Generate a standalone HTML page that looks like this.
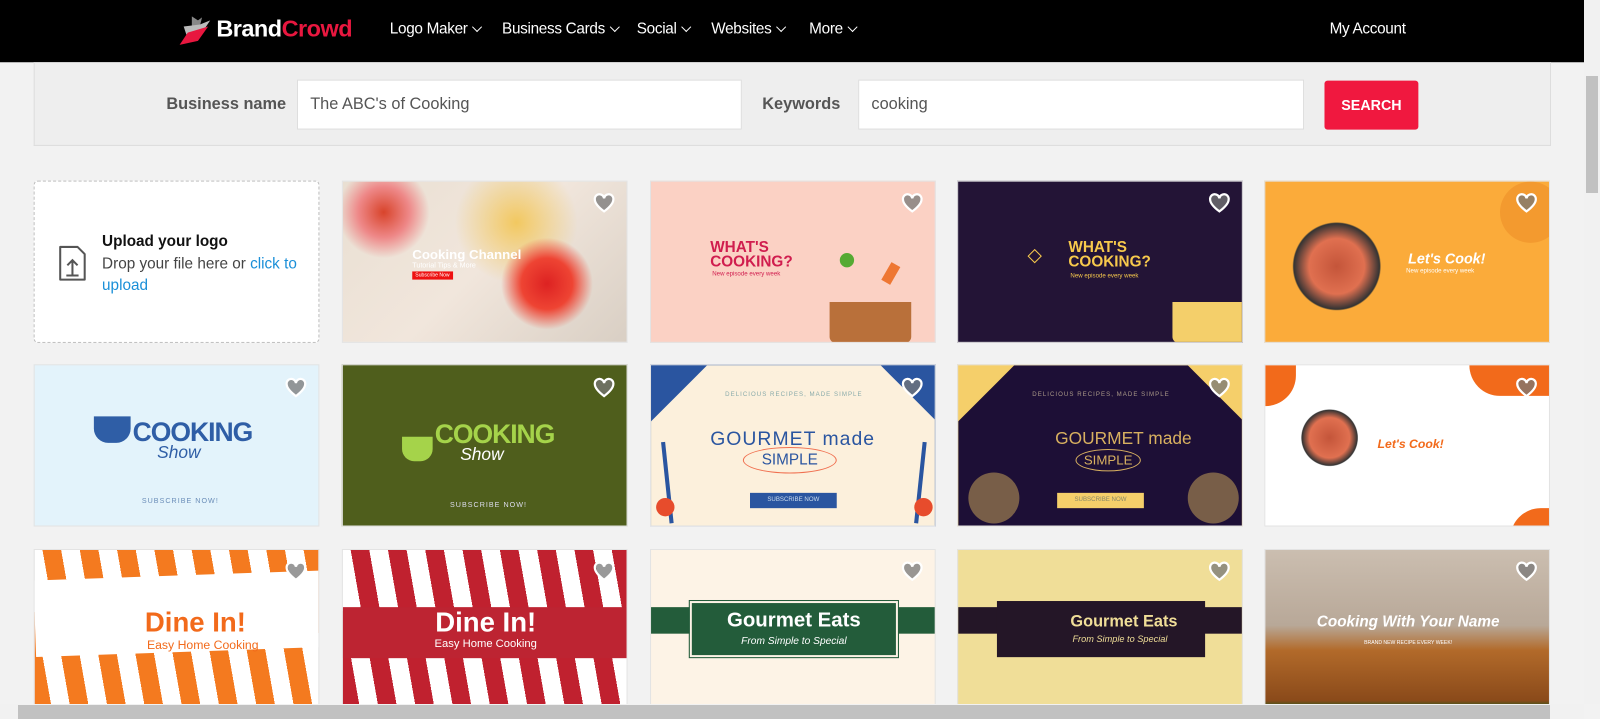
<!DOCTYPE html>
<html><head><meta charset="utf-8"><style>
*{box-sizing:border-box;margin:0;padding:0}
body{width:1600px;height:719px;overflow:hidden;background:#f2f2f2;font-family:"Liberation Sans",sans-serif;position:relative}
#w{position:absolute;left:0;top:0;width:1568px;height:705px;transform:scale(1.020408);transform-origin:0 0}
.nav{position:absolute;left:0;top:0;width:1568px;height:61px;background:#000;color:#fff}
.nav .it{position:absolute;top:20px;font-size:15px;letter-spacing:-0.3px}
.chev{display:inline-block;width:7px;height:7px;border-right:1.6px solid #fff;border-bottom:1.6px solid #fff;transform:rotate(45deg);margin-left:6px;position:relative;top:-3px}
.panel{position:absolute;left:33px;top:61px;width:1487px;height:82px;background:#eee;border:1px solid #ddd;border-top:none}
.lbl{position:absolute;top:94px;font-size:16px;font-weight:bold;color:#555}
.inp{position:absolute;top:78px;height:49px;background:#fff;border:1px solid #ddd;font-size:16px;color:#555;padding:15px 12px}
.btn{position:absolute;left:1298px;top:79px;width:92px;height:48px;background:#f0183f;border-radius:3px;color:#fff;font-weight:bold;font-size:14px;text-align:center;line-height:48px}
.card{position:absolute;width:280px;overflow:hidden;border:1px solid #e3e3e3}
.vs{position:absolute;left:1584px;top:0;width:16px;height:704px;background:#f1f1f1}
.hs{position:absolute;left:0;top:704px;width:1584px;height:15px;background:#f1f1f1}
</style></head><body>
<div id="w">
<div class="nav">
 <svg style="position:absolute;left:174px;top:14px" width="36" height="32" viewBox="0 0 36 32"><path d="M14 2l6 4 4-3-2 8-8 4z" fill="#888"/><path d="M6 12l16-2 10-4-8 12-14 6z" fill="#bbb"/><path d="M2 30l8-12 20-6-10 14z" fill="#e8173f"/></svg>
 <div style="position:absolute;left:212px;top:15px;font-size:23px;font-weight:bold;letter-spacing:-0.5px">Brand<span style="color:#e8173f">Crowd</span></div>
 <div class="it" style="left:382px">Logo Maker<span class="chev"></span></div>
 <div class="it" style="left:492px">Business Cards<span class="chev"></span></div>
 <div class="it" style="left:624px">Social<span class="chev"></span></div>
 <div class="it" style="left:697px">Websites<span class="chev"></span></div>
 <div class="it" style="left:793px">More<span class="chev"></span></div>
 <div class="it" style="left:1303px">My Account</div>
</div>
<div class="panel"></div>
<div class="lbl" style="left:163px">Business name</div>
<div class="inp" style="left:291px;width:436px">The ABC's of Cooking</div>
<div class="lbl" style="left:747px">Keywords</div>
<div class="inp" style="left:841px;width:437px">cooking</div>
<div class="btn">SEARCH</div>

<div class="card" style="left:33px;top:177px;height:159px;background:#fff;border:1px dashed #bbb;border-radius:4px">
 <svg style="position:absolute;left:22px;top:61px" width="30" height="38" viewBox="0 0 30 38"><path d="M3 3h17l7 7v25H3z" fill="none" stroke="#555" stroke-width="2" stroke-linejoin="round"/><path d="M15 30V16M10 21l5-5 5 5M9 31h12" fill="none" stroke="#555" stroke-width="2"/></svg>
 <div style="position:absolute;left:66px;top:50px;font-size:15px;font-weight:bold;color:#111">Upload your logo</div>
 <div style="position:absolute;left:66px;top:70px;width:200px;font-size:15px;line-height:21px;color:#444">Drop your file here or <span style="color:#1a8fd8">click to upload</span></div>
</div>
<div class="card" style="left:335px;top:177px;height:159px;background:radial-gradient(circle at 40px 30px,#d8442b 0,#e88 25px,transparent 45px),radial-gradient(circle at 200px 100px,#d22 0,#e43 25px,transparent 45px),radial-gradient(circle at 170px 40px,#f2c860 0,transparent 60px),linear-gradient(135deg,#e9dfd2,#f1e6dc 50%,#d9cfc4)">
 <div style="position:absolute;left:68px;top:64px;color:#fff;font-size:13px;font-weight:bold">Cooking Channel</div>
 <div style="position:absolute;left:68px;top:79px;color:#fff;font-size:7px">Tutorial Tips &amp; More</div>
 <div style="position:absolute;left:68px;top:88px;background:#e11;color:#fff;font-size:5px;padding:1px 3px">Subscribe Now</div>
</div>
<div class="card" style="left:637px;top:177px;height:159px;background:#fbd1c4">
 <div style="position:absolute;left:58px;top:58px;color:#d01d4e;font-size:15px;font-weight:bold;line-height:14px">WHAT'S<br>COOKING?</div>
 <div style="position:absolute;left:60px;top:88px;color:#d01d4e;font-size:6px">New episode every week</div>
 <div style="position:absolute;left:175px;top:118px;width:80px;height:40px;background:#b9703a;border-radius:0 0 6px 6px"></div>
 <div style="position:absolute;left:185px;top:70px;width:14px;height:14px;background:#5a3;border-radius:50%"></div>
 <div style="position:absolute;left:230px;top:80px;width:10px;height:20px;background:#e73;transform:rotate(30deg)"></div>
</div>
<div class="card" style="left:938px;top:177px;height:159px;background:#231436">
 <div style="position:absolute;left:108px;top:58px;color:#f7c94c;font-size:15px;font-weight:bold;line-height:14px">WHAT'S<br>COOKING?</div>
 <div style="position:absolute;left:110px;top:90px;color:#f7c94c;font-size:6px">New episode every week</div>
 <div style="position:absolute;left:210px;top:118px;width:70px;height:40px;background:#f4cf6a;border-radius:0 0 0 6px"></div>
 <div style="position:absolute;left:70px;top:68px;width:10px;height:10px;border:1px solid #f7c94c;transform:rotate(45deg)"></div>
</div>
<div class="card" style="left:1239px;top:177px;height:159px;background:#fbab3a">
 <div style="position:absolute;left:22px;top:35px;width:96px;height:96px;border-radius:50%;background:radial-gradient(circle,#c4553a 0,#e07050 40%,#333 62%,#fbab3a 64%)"></div>
 <div style="position:absolute;left:140px;top:67px;color:#fff;font-size:14px;font-style:italic;font-weight:bold">Let's Cook!</div>
 <div style="position:absolute;left:138px;top:85px;color:#fff;font-size:6px">New episode every week</div>
 <div style="position:absolute;left:230px;top:0;width:60px;height:60px;border-radius:50%;background:#f39a2f"></div>
</div>
<div class="card" style="left:33px;top:357px;height:159px;background:#e3f3fb">
 <div style="position:absolute;left:58px;top:50px;width:36px;height:26px;background:#2f5ea6;border-radius:0 0 14px 14px"></div>
 <div style="position:absolute;left:96px;top:50px;color:#2f5ea6;font-size:26px;font-weight:bold;letter-spacing:-1px">COOKING</div>
 <div style="position:absolute;left:120px;top:76px;color:#2f5ea6;font-size:17px;font-style:italic">Show</div>
 <div style="position:absolute;left:105px;top:130px;color:#6a8db8;font-size:7px;letter-spacing:1px">SUBSCRIBE NOW!</div>
</div>
<div class="card" style="left:335px;top:357px;height:159px;background:#4f5e1c">
 <div style="position:absolute;left:58px;top:70px;width:30px;height:24px;background:#a5d34a;border-radius:0 0 12px 12px"></div>
 <div style="position:absolute;left:90px;top:52px;color:#a5d34a;font-size:26px;font-weight:bold;letter-spacing:-1px">COOKING</div>
 <div style="position:absolute;left:115px;top:78px;color:#fff;font-size:17px;font-style:italic">Show</div>
 <div style="position:absolute;left:105px;top:134px;color:#dde;font-size:7px;letter-spacing:1px">SUBSCRIBE NOW!</div>
</div>
<div class="card" style="left:637px;top:357px;height:159px;background:#2a55a0">
 <div style="position:absolute;left:0;top:0;width:280px;height:159px;background:#fcf0dc;clip-path:polygon(55px 0,225px 0,280px 55px,280px 159px,0 159px,0 55px)"></div>
 <div style="position:absolute;left:0;width:280px;top:26px;text-align:center;color:#8aa;font-size:6px;letter-spacing:1px">DELICIOUS RECIPES, MADE SIMPLE</div>
 <div style="position:absolute;left:58px;top:62px;color:#2a55a0;font-size:19px;letter-spacing:1px">GOURMET made</div>
 <div style="position:absolute;left:90px;top:80px;width:92px;height:26px;border:1.5px solid #f07050;border-radius:50%;color:#2a55a0;font-size:15px;text-align:center;line-height:24px">SIMPLE</div>
 <div style="position:absolute;left:97px;top:125px;width:85px;height:15px;background:#2a55a0;color:#cde;font-size:6px;text-align:center;line-height:15px">SUBSCRIBE NOW</div>
 <div style="position:absolute;left:14px;top:75px;width:4px;height:80px;background:#2a55a0;transform:rotate(-6deg)"></div>
 <div style="position:absolute;left:262px;top:75px;width:4px;height:80px;background:#2a55a0;transform:rotate(6deg)"></div>
 <div style="position:absolute;left:5px;top:130px;width:18px;height:18px;background:#e74c2c;border-radius:50%"></div>
 <div style="position:absolute;left:258px;top:130px;width:18px;height:18px;background:#e74c2c;border-radius:50%"></div>
</div>
<div class="card" style="left:938px;top:357px;height:159px;background:#f5cf6a">
 <div style="position:absolute;left:0;top:0;width:280px;height:159px;background:#1d0f36;clip-path:polygon(55px 0,225px 0,280px 55px,280px 159px,0 159px,0 55px)"></div>
 <div style="position:absolute;left:0;width:280px;top:26px;text-align:center;color:#a98;font-size:6px;letter-spacing:1px">DELICIOUS RECIPES, MADE SIMPLE</div>
 <div style="position:absolute;left:95px;top:62px;color:#d8b060;font-size:17px">GOURMET made</div>
 <div style="position:absolute;left:115px;top:82px;width:64px;height:22px;border:1.5px solid #d8b060;border-radius:50%;color:#d8b060;font-size:13px;text-align:center;line-height:20px">SIMPLE</div>
 <div style="position:absolute;left:97px;top:125px;width:85px;height:15px;background:#f5cf6a;color:#886;font-size:6px;text-align:center;line-height:15px">SUBSCRIBE NOW</div>
 <div style="position:absolute;left:10px;top:105px;width:50px;height:50px;background:#a08050;border-radius:50%;opacity:.7"></div>
 <div style="position:absolute;left:225px;top:105px;width:50px;height:50px;background:#a08050;border-radius:50%;opacity:.7"></div>
</div>
<div class="card" style="left:1239px;top:357px;height:159px;background:#fff">
 <div style="position:absolute;left:32px;top:40px;width:62px;height:62px;border-radius:50%;background:radial-gradient(circle,#c4553a 0,#e07050 45%,#333 62%,#fff 64%)"></div>
 <div style="position:absolute;left:110px;top:70px;color:#f26a1b;font-size:12px;font-style:italic;font-weight:bold">Let's Cook!</div>
 <div style="position:absolute;left:200px;top:0;width:80px;height:30px;border-radius:0 0 0 40px;background:#f26a1b"></div>
 <div style="position:absolute;left:0;top:0;width:30px;height:40px;border-radius:0 0 30px 0;background:#f26a1b"></div>
 <div style="position:absolute;left:240px;top:140px;width:60px;height:30px;border-radius:30px 0 0 0;background:#f26a1b"></div>
</div>
<div class="card" style="left:33px;top:538px;height:166px;background:repeating-linear-gradient(80deg,#f47a1f 0 18px,#fff 18px 36px)">
 <div style="position:absolute;left:0;top:25px;width:280px;height:75px;background:#fff;transform:rotate(-2deg)"></div>
 <div style="position:absolute;left:108px;top:56px;color:#f26a1b;font-size:27px;font-weight:bold">Dine In!</div>
 <div style="position:absolute;left:110px;top:86px;color:#f26a1b;font-size:12px">Easy Home Cooking</div>
</div>
<div class="card" style="left:335px;top:538px;height:166px;background:repeating-linear-gradient(80deg,#c0212f 0 18px,#fff 18px 36px)">
 <div style="position:absolute;left:0;top:56px;width:280px;height:50px;background:#bd2432"></div>
 <div style="position:absolute;left:0;width:280px;top:56px;text-align:center;color:#fff;font-size:27px;font-weight:bold">Dine In!</div>
 <div style="position:absolute;left:0;width:280px;top:86px;text-align:center;color:#fff;font-size:11px">Easy Home Cooking</div>
</div>
<div class="card" style="left:637px;top:538px;height:166px;background:#fdf3e6">
 <div style="position:absolute;left:0;top:56px;width:280px;height:26px;background:#235c3a"></div>
 <div style="position:absolute;left:38px;top:50px;width:204px;height:55px;background:#235c3a;border:2px solid #fdf3e6;outline:1px solid #235c3a"></div>
 <div style="position:absolute;left:0;width:280px;top:58px;text-align:center;color:#fff;font-size:20px;font-weight:bold">Gourmet Eats</div>
 <div style="position:absolute;left:0;width:280px;top:84px;text-align:center;color:#fff;font-size:10px;font-style:italic">From Simple to Special</div>
</div>
<div class="card" style="left:938px;top:538px;height:166px;background:#f0de98">
 <div style="position:absolute;left:0;top:56px;width:280px;height:26px;background:#241627"></div>
 <div style="position:absolute;left:38px;top:50px;width:204px;height:55px;background:#241627"></div>
 <div style="position:absolute;left:110px;top:62px;color:#f0de98;font-size:16px;font-weight:bold">Gourmet Eats</div>
 <div style="position:absolute;left:112px;top:82px;color:#f0de98;font-size:9px;font-style:italic">From Simple to Special</div>
</div>
<div class="card" style="left:1239px;top:538px;height:166px;background:linear-gradient(#cbbeb0 0,#b8a898 45%,#b26a2a 60%,#8a4a1a 90%,#2a5a1a 94%)">
 <div style="position:absolute;left:0;width:280px;top:62px;text-align:center;color:#fff;font-size:15px;font-style:italic;font-weight:bold">Cooking With Your Name</div>
 <div style="position:absolute;left:0;width:280px;top:88px;text-align:center;color:#fff;font-size:5px">BRAND NEW RECIPE EVERY WEEK!</div>
</div>

<svg width="0" height="0" style="position:absolute"><defs><symbol id="h" viewBox="0 0 24 22"><path d="M12 20C4 14 2 10 2 7a5 5 0 0 1 10-1 5 5 0 0 1 10 1c0 3-2 7-10 13z" fill="#777" fill-opacity=".75" stroke="#fff" stroke-width="2.4"/></symbol></defs></svg>
<svg style="position:absolute;left:581px;top:189px" width="22" height="20"><use href="#h"/></svg>
<svg style="position:absolute;left:883px;top:189px" width="22" height="20"><use href="#h"/></svg>
<svg style="position:absolute;left:1184px;top:189px" width="22" height="20"><use href="#h"/></svg>
<svg style="position:absolute;left:1485px;top:189px" width="22" height="20"><use href="#h"/></svg>
<svg style="position:absolute;left:279px;top:370px" width="22" height="20"><use href="#h"/></svg>
<svg style="position:absolute;left:581px;top:370px" width="22" height="20"><use href="#h"/></svg>
<svg style="position:absolute;left:883px;top:370px" width="22" height="20"><use href="#h"/></svg>
<svg style="position:absolute;left:1184px;top:370px" width="22" height="20"><use href="#h"/></svg>
<svg style="position:absolute;left:1485px;top:370px" width="22" height="20"><use href="#h"/></svg>
<svg style="position:absolute;left:279px;top:550px" width="22" height="20"><use href="#h"/></svg>
<svg style="position:absolute;left:581px;top:550px" width="22" height="20"><use href="#h"/></svg>
<svg style="position:absolute;left:883px;top:550px" width="22" height="20"><use href="#h"/></svg>
<svg style="position:absolute;left:1184px;top:550px" width="22" height="20"><use href="#h"/></svg>
<svg style="position:absolute;left:1485px;top:550px" width="22" height="20"><use href="#h"/></svg>
</div>
<div class="vs"><div style="position:absolute;left:2px;top:76px;width:12px;height:117px;background:#c1c1c1"></div></div>
<div class="hs"><div style="position:absolute;left:18px;top:1px;width:1532px;height:14px;background:#c1c1c1"></div></div>
</body></html>
